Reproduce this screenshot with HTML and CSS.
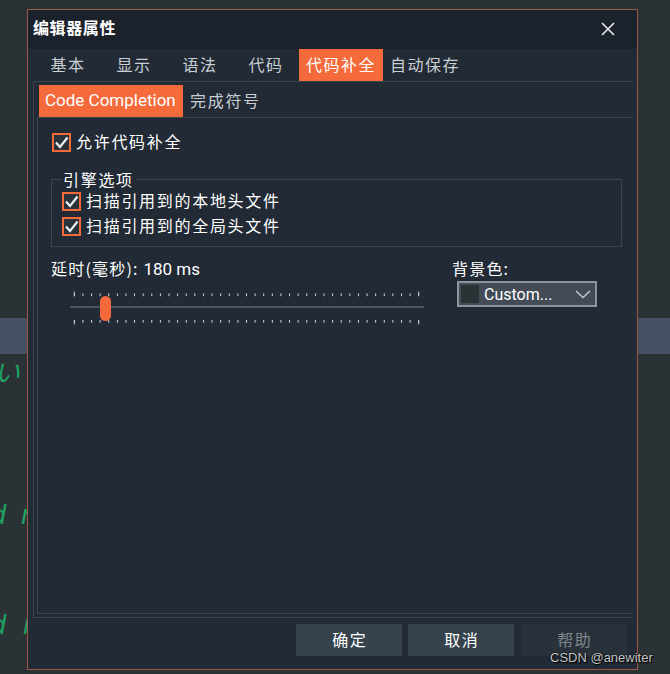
FILE: index.html
```html
<!DOCTYPE html>
<html lang="zh-CN">
<head>
<meta charset="utf-8">
<title>编辑器属性</title>
<link rel="stylesheet" href="styles.css">
</head>
<body>
<div class="desk">
  <div class="editor">
    <div class="band"></div>
    <div class="code code-1">い 方</div>
    <div class="code code-2">d n</div>
    <div class="code code-3">d r</div>
  </div>

  <div class="dialog">
    <div class="titlebar">
      <span class="title">编辑器属性</span>
      <svg class="close" width="14" height="14" viewBox="0 0 14 14"><path d="M1 1 L13 13 M13 1 L1 13" stroke="#e6e8ea" stroke-width="1.6" fill="none"/></svg>
    </div>
    <div class="dlg-body">
      <div class="tabs">
        <div class="tab">基本</div>
        <div class="tab">显示</div>
        <div class="tab">语法</div>
        <div class="tab">代码</div>
        <div class="tab active">代码补全</div>
        <div class="tab">自动保存</div>
      </div>
      <div class="pane">
        <div class="subtabs">
          <div class="subtab active">Code Completion</div>
          <div class="subtab">完成符号</div>
        </div>
        <div class="subpane">
          <label class="check top-check">
            <span class="box"><svg width="15" height="15" viewBox="0 0 15 15"><path d="M2 7.5 L6 12 L13.5 2.5" stroke="#eceef0" stroke-width="2.2" fill="none"/></svg></span>
            <span class="lbl">允许代码补全</span>
          </label>
          <fieldset class="group">
            <legend>引擎选项</legend>
            <label class="check first">
              <span class="box"><svg width="15" height="15" viewBox="0 0 15 15"><path d="M2 7.5 L6 12 L13.5 2.5" stroke="#eceef0" stroke-width="2.2" fill="none"/></svg></span>
              <span class="lbl">扫描引用到的本地头文件</span>
            </label>
            <label class="check">
              <span class="box"><svg width="15" height="15" viewBox="0 0 15 15"><path d="M2 7.5 L6 12 L13.5 2.5" stroke="#eceef0" stroke-width="2.2" fill="none"/></svg></span>
              <span class="lbl">扫描引用到的全局头文件</span>
            </label>
          </fieldset>
          <div class="settings">
            <div class="delay">
              <div class="row-label">延时(毫秒): <span class="latin">180 ms</span></div>
              <svg class="slider" width="354" height="35" viewBox="0 0 354 35">
                <defs>
                  <pattern id="tk" x="3.8" y="0" width="8.61" height="35" patternUnits="userSpaceOnUse">
                    <rect x="0" y="0" width="1" height="35" fill="#d4d8dc"/>
                  </pattern>
                </defs>
                <rect x="3.8" y="3.5" width="345" height="2.7" fill="url(#tk)"/>
                <rect x="3.8" y="30" width="345" height="2.7" fill="url(#tk)"/>
                <rect x="3.8" y="1.5" width="1" height="4.7" fill="#d4d8dc"/>
                <rect x="348.2" y="1.5" width="1" height="4.7" fill="#d4d8dc"/>
                <rect x="3.8" y="30" width="1" height="4.5" fill="#d4d8dc"/>
                <rect x="348.2" y="30" width="1" height="4.5" fill="#d4d8dc"/>
                <rect x="0" y="16" width="354" height="2" fill="#4b535d"/>
                <rect x="30" y="6" width="11" height="25" rx="5.5" fill="#f46a3b"/>
              </svg>
            </div>
            <div class="bgcolor">
              <div class="row-label">背景色:</div>
              <div class="combo">
                <span class="swatch"></span>
                <span class="combo-text">Custom...</span>
                <svg class="chev" width="16" height="9" viewBox="0 0 16 9"><path d="M1 1 L8 7.5 L15 1" stroke="#c3c9cf" stroke-width="1.5" fill="none"/></svg>
              </div>
            </div>
          </div>
        </div>
      </div>
      <div class="buttons">
        <div class="btn">确定</div>
        <div class="btn">取消</div>
        <div class="btn disabled">帮助</div>
      </div>
    </div>
  </div>

  <div class="watermark">CSDN @anewiter</div>
</div>
</body>
</html>
```

FILE: styles.css
```css
html, body {
  margin: 0;
  padding: 0;
  background: #2b3235;
  overflow: hidden;
}

.desk {
  position: relative;
  width: 670px;
  height: 674px;
  overflow: hidden;
  font-family: "Noto Sans CJK SC", "Noto Sans", sans-serif;
}

/* background editor behind the dialog */
.editor {
  display: flex;
  flex-direction: column;
  padding-top: 318px;
}
.band {
  height: 36px;
  background: #465062;
}
.code {
  color: #1f9f62;
  font-family: "DejaVu Sans", "Noto Sans CJK SC", sans-serif;
  font-style: italic;
  font-size: 26px;
  line-height: 30px;
  height: 30px;
  white-space: nowrap;
}
.code-1 { margin-top: 4px; margin-left: -6px; }
.code-2 { margin-top: 112px; margin-left: -10px; word-spacing: 6px; }
.code-3 { margin-top: 80px; margin-left: -10px; word-spacing: 8px; }

/* dialog window */
.dialog {
  position: absolute;
  left: 27px;
  top: 9px;
  width: 609px;
  height: 659px;
  border: 1px solid #9b5842;
  background: #212a35;
  display: flex;
  flex-direction: column;
}

.titlebar {
  height: 39px;
  flex: none;
  box-sizing: border-box;
  background: #1c222c;
  display: flex;
  align-items: center;
  justify-content: space-between;
  padding: 0 22px 1px 5px;
}
.title {
  color: #ffffff;
  font-weight: bold;
  font-size: 16px;
  letter-spacing: 0.6px;
  margin-bottom: 4px;
}
.close {
  display: block;
}

.dlg-body {
  flex: 1;
  display: flex;
  flex-direction: column;
  padding: 0 4px 13px 5px;
}

.tabs {
  height: 32px;
  flex: none;
  display: flex;
  padding-left: 2px;
}
.tab {
  min-width: 66px;
  padding: 0 7px 3px 7px;
  box-sizing: border-box;
  display: flex;
  align-items: center;
  justify-content: center;
  color: #c9ced3;
  font-size: 16px;
  letter-spacing: 1.5px;
  white-space: nowrap;
}
.tab.active {
  background: #f46a3b;
  color: #ffffff;
  height: 33px;
  padding-bottom: 4px;
}

.pane {
  flex: 1;
  display: flex;
  flex-direction: column;
  border-top: 1px solid #3a4550;
  border-left: 1px solid #3a4550;
  border-bottom: 1px solid #3a4550;
  padding: 3px 0 3px 3px;
}

.subtabs {
  height: 32px;
  flex: none;
  display: flex;
  padding-left: 2px;
}
.subtab {
  display: flex;
  align-items: center;
  padding: 0 7px 3px 7px;
  color: #c9ced3;
  font-size: 16px;
  letter-spacing: 1.7px;
  white-space: nowrap;
}
.subtab.active {
  background: #f46a3b;
  color: #ffffff;
  font-family: Roboto, "Noto Sans", sans-serif;
  font-size: 17px;
  letter-spacing: 0;
  padding: 0 0 3px 6px;
  width: 144px;
  box-sizing: border-box;
}

.subpane {
  flex: 1;
  border-top: 1px solid #3a4550;
  border-left: 1px solid #3a4550;
  border-bottom: 1px solid #3a4550;
  padding: 15px 0 0 13px;
  display: flex;
  flex-direction: column;
}

.check {
  display: flex;
  align-items: center;
  height: 19px;
}
.box {
  width: 19px;
  height: 19px;
  box-sizing: border-box;
  border: 2px solid #f46a3b;
  background: #2a323b;
  display: flex;
  align-items: center;
  justify-content: center;
  flex: none;
}
.box svg { display: block; }
.lbl {
  margin-left: 5px;
  margin-top: -3px;
  color: #ffffff;
  font-size: 16px;
  letter-spacing: 1.7px;
  white-space: nowrap;
}
.top-check {
  margin-left: 1px;
}

.group {
  margin: 18px 0 0 0;
  width: 571px;
  height: 77px;
  box-sizing: border-box;
  border: 1px solid #3a4550;
  padding: 0 0 0 10px;
  display: flex;
  flex-direction: column;
  gap: 6px;
  min-width: 0;
}
.group legend {
  color: #ffffff;
  font-size: 16px;
  letter-spacing: 1.7px;
  padding: 0 2px 0 1px;
  margin-left: 0;
  line-height: 18px;
  height: 18px;
  margin-top: -3px;
}
.group .check.first {
  margin-top: 4px;
}

.settings {
  display: flex;
  margin-top: 11px;
}
.delay {
  width: 401px;
  display: flex;
  flex-direction: column;
}
.row-label {
  color: #ffffff;
  font-size: 16px;
  letter-spacing: 1.2px;
  line-height: 20px;
  height: 20px;
  white-space: nowrap;
}
.latin {
  font-family: Roboto, "Noto Sans", sans-serif;
  font-size: 17px;
  letter-spacing: 0;
}
.slider {
  display: block;
  margin: 12px 0 0 19px;
}
.bgcolor {
  display: flex;
  flex-direction: column;
}
.combo {
  margin: 3px 0 0 5px;
  width: 140px;
  height: 26px;
  box-sizing: border-box;
  border: 2px solid #8b949c;
  background: #434c56;
  display: flex;
  align-items: center;
  padding-left: 2px;
}
.swatch {
  width: 18px;
  height: 18px;
  background: #2b3235;
  flex: none;
}
.combo-text {
  margin-left: 5px;
  color: #ffffff;
  font-family: Roboto, "Noto Sans", sans-serif;
  font-size: 16px;
  flex: 1;
}
.chev {
  display: block;
  margin-right: 4px;
}

.buttons {
  flex: none;
  display: flex;
  justify-content: flex-end;
  gap: 6px;
  margin-top: 6px;
  padding-right: 6px;
}
.btn {
  width: 106px;
  height: 32px;
  box-sizing: border-box;
  padding-bottom: 3px;
  background: #36434c;
  color: #ffffff;
  font-size: 16px;
  letter-spacing: 1.7px;
  text-indent: 1.7px;
  display: flex;
  align-items: center;
  justify-content: center;
}
.btn.disabled {
  background: #29323b;
  color: #7d848b;
  margin-left: 1px;
}

.watermark {
  position: absolute;
  left: 550px;
  top: 650px;
  color: #c4c6c8;
  font-family: "Liberation Sans", Arial, sans-serif;
  font-size: 13px;
  text-shadow: 0 0 2px #000000, 1px 1px 1px #000000;
  white-space: nowrap;
}
```
